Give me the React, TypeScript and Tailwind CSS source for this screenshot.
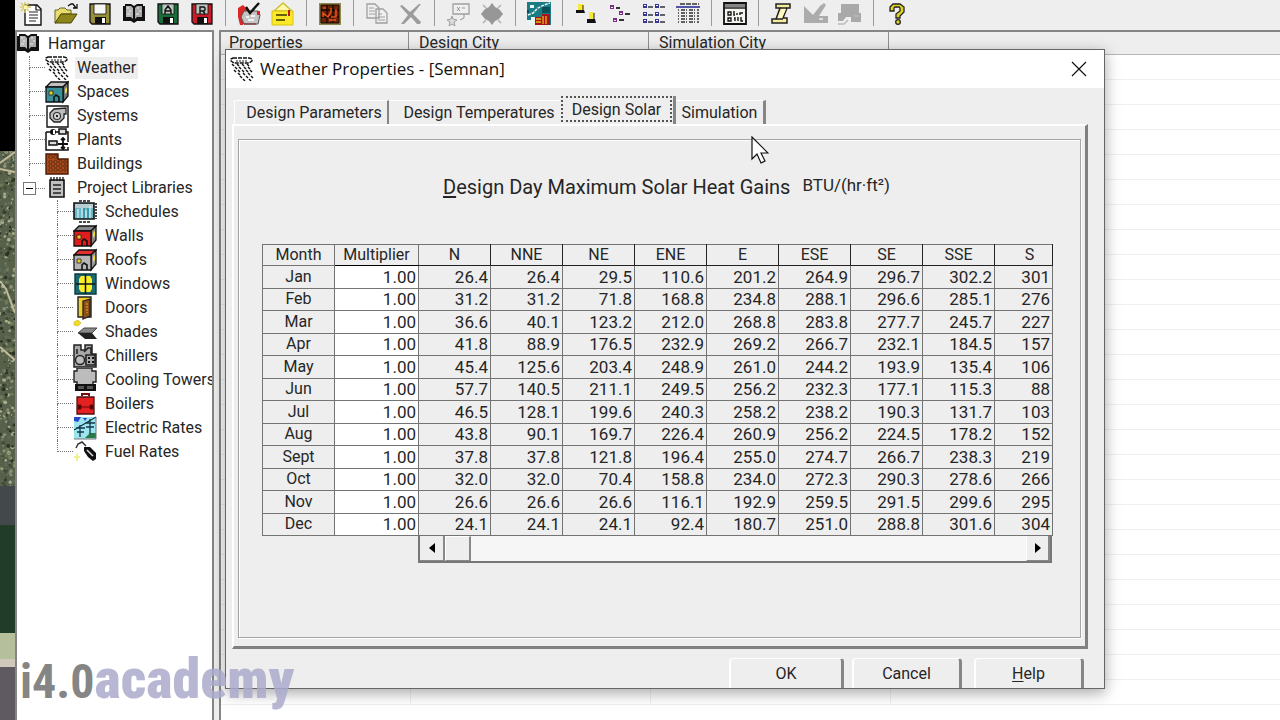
import React from "react";

type IconProps = { children: React.ReactNode; size?: string };

function Pix({ children, size = "h-6 w-6" }: IconProps) {
  return (
    <svg viewBox="0 0 24 24" className={`${size} shrink-0`} aria-hidden="true">
      {children}
    </svg>
  );
}

/* ---------- toolbar icons ---------- */

const NewIcon = () => (
  <Pix>
    <path d="M5 3h12l4 4v16H5z" fill="#fff" stroke="#111" strokeWidth="1.4" />
    <path d="M16 3v5h5" fill="none" stroke="#111" strokeWidth="1.2" />
    <path d="M9 10h9M9 13h9M9 16h9M9 19h7" stroke="#222" strokeWidth="1.2" />
    <path d="M1 1l8 8M9 1L1 9M5 0v11M0 5h11" stroke="#d8cc70" strokeWidth="1.5" />
    <path d="M4 4h3v3H4z" fill="#fff8b0" />
  </Pix>
);
const OpenIcon = () => (
  <Pix>
    <path d="M1 8h3l2-2h5l2 2h4v4H7l-5 9H1z" fill="#e8dc70" stroke="#6a6420" />
    <path d="M7 12h16l-6 9H1z" fill="#8c861c" stroke="#4a4600" />
    <path d="M14 4l3-2h2l3 4M19 6h4V2" fill="none" stroke="#111" strokeWidth="1.3" />
  </Pix>
);
const Floppy = ({ color, letter }: { color: string; letter?: string }) => (
  <Pix>
    <path d="M2 2h20v20H4l-2-2z" fill={color} stroke="#111" strokeWidth="1.3" />
    <path d="M6 2h12v10H6z" fill={letter ? "#b9c4bc" : "#f5f5f5"} stroke="#111" strokeWidth="0.8" />
    <path d="M7 15h11v7H7z" fill="#111" />
    <path d="M14 16h3v5h-3z" fill="#fff" />
    {letter === "A" && <path d="M9 12V8l3-4 3 4v4M9 9h6" fill="none" stroke="#111" strokeWidth="1.4" />}
    {letter === "R" && <path d="M10 12V5h4l1 1v2l-1 1h-4M13 9l2 3" fill="none" stroke="#111" strokeWidth="1.4" />}
  </Pix>
);
const BookIcon = () => (
  <Pix>
    <path d="M1 4h2V2h6l3 2 3-2h6v2h2v15h-8l-3 2-3-2H1z" fill="#111" />
    <path d="M4 4h5l2 2v11l-2-2H4z" fill="#b5b5b5" />
    <path d="M20 4h-5l-2 2v11l2-2h5z" fill="#a8a8a8" />
    <path d="M5 6h2M7 9h2M5 12h3M15 6h2M17 9h2M14 12h3" stroke="#eee" />
  </Pix>
);
const EditIcon = () => (
  <Pix>
    <path d="M1 6l5-3 4 4 1 9-5 7H3L1 15z" fill="#d82828" />
    <path d="M7 9h14l2 4-2 9H7L4 15z" fill="#c4c4c4" stroke="#555" />
    <path d="M9 5l4 6L22 1" fill="none" stroke="#111" strokeWidth="2.4" />
    <path d="M9 15h3M14 14h4M11 18h6" stroke="#fff" strokeWidth="1.6" />
    <path d="M20 9h3v4h-3z" fill="#e02020" />
    <path d="M7 22h12" stroke="#7a2020" />
  </Pix>
);
const NoteIcon = () => (
  <Pix>
    <path d="M3 9L12 1l9 8z" fill="#fff9b0" stroke="#cdbf30" strokeWidth="1.4" />
    <path d="M1 9h21v14H1z" fill="#fbe928" stroke="#d8c410" />
    <path d="M5 13h11M5 18h9" stroke="#3a3600" strokeWidth="1.5" />
    <path d="M17 8h2v6h-2z" fill="#c01818" />
  </Pix>
);
const BoardIcon = () => (
  <Pix>
    <path d="M1 1h22v22H1z" fill="#8f8850" />
    <path d="M3 3h18v18H3z" fill="#6b2408" stroke="#1a0800" />
    <path d="M3 8h18M3 15h18M9 3v18M15 3v18" stroke="#180800" strokeWidth="1.3" />
    <path d="M5 15v-4l5 4 3-5v-4M18 7v8h-5M5 6h3M11 18h7" fill="none" stroke="#e8501c" strokeWidth="1.5" />
  </Pix>
);
const CopyIcon = () => (
  <Pix>
    <path d="M2 2h8l4 4v10H2zM11 7h7l4 4v10H11z" fill="#efefef" stroke="#a0a0a0" strokeWidth="1.3" />
    <path d="M4 6h5M4 9h6M4 12h6M13 12h4M13 15h7M13 18h7" stroke="#a0a0a0" />
  </Pix>
);
const DeleteIcon = () => (
  <Pix>
    <path d="M3 3l8 7 9-8h2l-8 10 8 8-1 2h-3l-6-7-7 7H2l7-9-8-9z" fill="#9c9c9c" />
  </Pix>
);
const TagIcon = () => (
  <Pix>
    <path d="M7 2h16v10H7z" fill="#f0f0f0" stroke="#a0a0a0" strokeWidth="1.3" />
    <path d="M11 5l3 4M14 5l-3 4M16 6h3M18 12v4l-4 2" fill="none" stroke="#989898" />
    <path d="M6 14l1 3 4 1-3 2 1 4-3-2-3 2 1-4-3-2 4-1z" fill="#ddd" stroke="#a0a0a0" />
  </Pix>
);
const DiamondIcon = () => (
  <Pix>
    <path d="M12 1l3 4 4 2 4 5-4 5-4 2-3 4-3-4-4-2-4-5 4-5 4-2z" fill="#979797" />
    <path d="M3 3l3 3M21 3l-3 3M3 21l3-3M21 21l-3-3" stroke="#b0b0b0" strokeWidth="1.5" />
  </Pix>
);
const CityIcon = () => (
  <Pix>
    <path d="M0 0h24v23H0z" fill="#1c7c84" />
    <path d="M1 13l5-2 5-5 6-3 6-2" fill="none" stroke="#e8f4f4" strokeWidth="1.5" strokeDasharray="3 1" />
    <path d="M0 23v-5h4v-3h4v8zM3 3h4v3H3z" fill="#e9f4f4" />
    <path d="M8 23v-8h7v-3h8v11z" fill="#a81414" />
    <path d="M9 17h5M9 20h5M16 14v8M19 14v8" stroke="#e8b420" strokeWidth="1.3" />
    <path d="M15 5h8v6h-8zM0 8h2v3H0z" fill="#0b5058" />
  </Pix>
);
const HatsIcon = () => (
  <Pix>
    <path d="M4 2h5v6H4zM15 10h5v7h-5z" fill="#fbe830" />
    <path d="M2 8h8l1 3H2zM13 17h8l1 4h-9z" fill="#111" />
    <path d="M9 3v5M20 11v6" stroke="#222" />
  </Pix>
);
const NodesIcon = () => (
  <Pix>
    <path d="M2 3h4v4H2zM11 9h4v4h-4zM5 16h4v4H5z" fill="#7c2c88" />
    <path d="M3 5h2v1H3zM12 11h2v1h-2zM6 18h2v1H6z" fill="#fff" />
    <path d="M8 6h4M17 12h5M11 18h5" stroke="#333" strokeWidth="1.8" />
  </Pix>
);
const ListIcon = () => (
  <Pix>
    {[4, 12, 19].map((y) => (
      <g key={y}>
        <path d={`M1 ${y - 2}h4v4h-4zM13 ${y - 2}h4v4h-4z`} fill="#34349a" />
        <path d={`M2 ${y - 1}h2v1h-2zM14 ${y - 1}h2v1h-2z`} fill="#fff" />
        <path d={`M6 ${y + 1}h5M18 ${y + 1}h5`} stroke="#333" strokeWidth="1.5" />
      </g>
    ))}
  </Pix>
);
const DetailIcon = () => (
  <Pix>
    <path d="M4 2h19" stroke="#333" strokeWidth="1.4" strokeDasharray="5 1" />
    <path d="M0 5h24" stroke="#4040a0" strokeWidth="1.8" />
    <path d="M2 8h21M2 11h21M2 14h21M2 17h21M2 20h21" stroke="#333" strokeWidth="1.5" strokeDasharray="1 2 4 1" />
  </Pix>
);
const WindowIcon = () => (
  <Pix>
    <path d="M1 1h22v21H1z" fill="#f4f4f0" stroke="#111" strokeWidth="1.8" />
    <path d="M2 2h20v3H2z" fill="#858585" />
    <path d="M1 6h22" stroke="#111" strokeWidth="1.4" />
    <path d="M5 10h3v3H5zM5 16h3v3H5z" fill="none" stroke="#111" strokeWidth="1.3" />
    <path d="M11 9v4h1M14 11v2M17 13v-2h3M11 16h1v3M15 15v4M18 15v4h2" fill="none" stroke="#111" strokeWidth="1.4" />
  </Pix>
);
const ScrollIcon = () => (
  <Pix>
    <path d="M6 2h14v4h-3l-4 10h4v5H2v-4h4L10 6H6z" fill="#f4ec9c" stroke="#222" strokeWidth="1.5" />
    <path d="M10 6h7M6 17h7" stroke="#222" strokeWidth="1.3" />
    <path d="M12 7h4l-4 9H8z" fill="#fff9c8" />
  </Pix>
);
const ChartIcon = () => (
  <Pix>
    <path d="M0 4l9 9 7-9 4-3 2 2-7 11h9v7H0z" fill="#acacac" />
    <path d="M15 17h4" stroke="#eee" strokeWidth="1.5" />
  </Pix>
);
const TruckIcon = () => (
  <Pix>
    <path d="M3 2h18v9h2v9H13v-5H8l-3 4H0v-8h3z" fill="#a9a9a9" />
    <path d="M0 22h6l4-4M16 14h5" fill="none" stroke="#bbb" strokeWidth="1.5" />
  </Pix>
);
const HelpIcon = () => (
  <Pix>
    <path d="M5 9V5l3-3h7l4 3v5l-4 4v2h-4v-4l4-3V6l-1-1h-4L9 6v3z" fill="#e2d424" stroke="#222" strokeWidth="1.3" />
    <circle cx="13" cy="20" r="2.3" fill="#e2d424" stroke="#222" strokeWidth="1.3" />
  </Pix>
);

/* ---------- tree icons ---------- */

const drops: [number, number[]][] = [
  [8, [3, 8, 13, 18]],
  [11, [6, 10, 15, 19]],
  [14, [5, 9, 13, 17, 21]],
  [17, [9, 14, 19]],
  [20, [11, 17, 22]],
  [23, [14, 20]],
];

const WeatherIcon = () => (
  <Pix>
    <path d="M3 1h16l3 1v2l-3 2H4L1 4V2z" fill="#fff" stroke="#111" strokeWidth="1.4" strokeDasharray="4 1" />
    <path d="M6 4h12" stroke="#222" strokeWidth="1.2" strokeDasharray="2 1" />
    {drops.map(([y, xs]) => xs.map((x) => <path key={`${x}-${y}`} d={`M${x - 1} ${y - 1}l2 2`} stroke="#111" strokeWidth="1.4" />))}
  </Pix>
);
const Cube = ({ front, top, side }: { front: string; top: string; side: string }) => (
  <Pix>
    <path d="M1 7l5-5h17l-5 5z" fill={top} stroke="#111" strokeWidth="1.3" />
    <path d="M18 7l5-5v14l-5 6z" fill={side} stroke="#111" strokeWidth="1.3" />
    <path d="M1 7h17v15H1z" fill={front} stroke="#111" strokeWidth="1.3" />
    <path d="M4 11h4v4H4z" fill="#e8cc28" stroke="#222" strokeWidth="0.8" />
    <path d="M9 22v-5l2-2 3 2v5" fill="none" stroke="#111" strokeWidth="1.6" />
    <path d="M20 9l2-2v5l-2 2z" fill="#f0dc28" />
  </Pix>
);
const SystemsIcon = () => (
  <Pix>
    <path d="M2 2h21v21H2z" fill="#fff" stroke="#111" strokeWidth="1.4" />
    <path d="M21 4v6h-2v4l-4 4H9l-4-4V9l4-4z" fill="#bdbdbd" stroke="#222" strokeWidth="1.3" />
    <circle cx="12" cy="12" r="3.5" fill="#ddd" stroke="#333" strokeWidth="1.2" />
    <circle cx="12" cy="12" r="1.2" fill="#222" />
  </Pix>
);
const PlantsIcon = () => (
  <Pix>
    <path d="M1 4h22v10M1 4v18h22v-3" fill="#fff" stroke="#111" strokeWidth="1.5" />
    <circle cx="8" cy="4" r="3" fill="#111" />
    <path d="M8 2h2v4H8z" fill="#fff" />
    <path d="M14 1h7v5h-7zM4 13h8v4H4z" fill="#ddd" stroke="#111" strokeWidth="1.5" />
    <path d="M18 10v11M13 16h10M16 12l2-2 2 2M16 19l2 2 2-2" fill="none" stroke="#111" strokeWidth="1.8" />
  </Pix>
);
const BuildingsIcon = () => (
  <Pix>
    <path d="M1 2h12v5h10v15H1z" fill="#a8481c" stroke="#4a1a04" strokeWidth="1.4" />
    <path d="M4 4h3v2H4zM9 4h3v2H9z" fill="#d87030" stroke="#3a1400" strokeWidth="0.7" />
    {[9, 13, 17].map((y) => (
      <path
        key={y}
        d={`M4 ${y}h3v2h-3zM9 ${y}h3v2h-3zM14 ${y}h3v2h-3zM19 ${y}h2v2h-2z`}
        fill="#d87838"
        stroke="#3a1400"
        strokeWidth="0.7"
      />
    ))}
  </Pix>
);
const LibraryIcon = () => (
  <Pix>
    <path d="M5 4h14v17H5z" fill="#c0c0c0" stroke="#111" strokeWidth="1.6" />
    <path d="M6 1v4M9 1v4M12 1v4M15 1v4M18 1v4" stroke="#111" strokeWidth="1.3" />
    <path d="M8 9h8M8 13h8M8 17h8" stroke="#222" strokeWidth="1.5" />
  </Pix>
);
const SchedulesIcon = () => (
  <Pix>
    <path d="M6 1h12M6 22h12" stroke="#111" strokeWidth="1.5" strokeDasharray="3 1" />
    <path d="M1 3h20v16H1z" fill="#68b8c8" stroke="#111" strokeWidth="1.6" />
    <path d="M2 4h18v4H2z" fill="#b8ccd4" />
    <path d="M5 9v9M9 8v10M13 10v8M17 6v12" stroke="#d3eef4" strokeWidth="1.3" />
    <path d="M11 8v10M15 8v10" stroke="#27808c" strokeWidth="1.2" />
    <path d="M23 3v16" stroke="#111" strokeWidth="1.5" strokeDasharray="2 1" />
  </Pix>
);
const WindowsIcon = () => (
  <Pix>
    <path d="M2 2h21v20H2z" fill="#1a6c70" stroke="#0a3a3c" strokeWidth="1.4" />
    <path d="M8 4h9l2 3v10l-2 3H8l-2-3V7z" fill="#fbee28" />
    <path d="M12.5 2v20M3 12h19" stroke="#111" strokeWidth="1.5" />
  </Pix>
);
const DoorsIcon = () => (
  <Pix>
    <path d="M5 1h13v20H5z" fill="#f2cc28" stroke="#222" strokeWidth="1.4" />
    <path d="M10 5l7-2v17l-7 3z" fill="#8c5018" stroke="#222" strokeWidth="1.3" />
    <path d="M14 7v10" stroke="#c88830" strokeWidth="1.5" strokeDasharray="2 1" />
  </Pix>
);
const ShadesIcon = () => (
  <Pix>
    <path d="M1 2l4-2 3 3-3 3-4-1z" fill="#f2dc28" stroke="#d0b830" strokeWidth="0.7" />
    <path d="M5 13l6-5h13l-5 5z" fill="#8a8a8a" stroke="#444" />
    <path d="M5 13h14l5 6H12z" fill="#222" />
  </Pix>
);
const ChillersIcon = () => (
  <Pix>
    <path d="M1 1h7v5h4V1h7v9h4v13H1z" fill="#a8a8a8" stroke="#222" strokeWidth="1.5" />
    <circle cx="7" cy="16" r="4.5" fill="#bdbdbd" stroke="#222" strokeWidth="1.4" />
    <path d="M13 11h9v10h-9zM11 8l4-4h3v6M4 5v5" fill="none" stroke="#222" strokeWidth="1.6" />
    <path d="M15 14h2M19 14h2M15 18h2M19 18h2" stroke="#111" strokeWidth="1.8" />
  </Pix>
);
const TowersIcon = () => (
  <Pix>
    <path d="M4 0h15v3h4v11h-3v3H4v-3H1V3h3z" fill="#bcbcbc" stroke="#222" strokeWidth="1.4" />
    <path d="M2 16h21v7H2z" fill="#111" />
    <path d="M5 18h6v3H5zM14 18h6v3h-6z" fill="#555" />
  </Pix>
);
const BoilersIcon = () => (
  <Pix>
    <path d="M9 4V2h7v2" fill="none" stroke="#701010" strokeWidth="2" />
    <path d="M4 5h17v17H4z" fill="#e42020" stroke="#501010" strokeWidth="1.3" />
    <path d="M5 13h3v4H5zM17 13h3v4h-3zM8 15h9" fill="#4a0000" stroke="#6a0808" />
  </Pix>
);
const ElectricIcon = () => (
  <Pix>
    <path d="M1 1h22v22H1z" fill="#9ce4f0" />
    <path d="M1 1h7l-3 5-4-1zM10 2h4l-2 3z" fill="#2848d0" />
    <path d="M12 22l5-5h6v5z" fill="#287848" />
    <path d="M1 14L23 1M7 9v12M17 3v15M3 12h9M4 16h7M12 7h10M13 11h8" stroke="#143848" strokeWidth="1.3" />
    <path d="M23 1v22H1" fill="none" stroke="#777" />
  </Pix>
);
const FuelIcon = () => (
  <Pix>
    <path d="M3 8l2-4 4-2 4 4" fill="none" stroke="#333" strokeWidth="1.5" />
    <path d="M11 7h6l6 6v6l-3 2-5-4-4-6z" fill="#111" />
    <path d="M14 10l6 6" stroke="#ddd" strokeWidth="1.5" />
    <path d="M4 13v8M1 17h6" stroke="#f2ec78" strokeWidth="1.5" />
  </Pix>
);

/* ---------- data ---------- */

type Tool = { label: string; icon: React.ReactNode };
const toolGroups: Tool[][] = [
  [
    { label: "New", icon: <NewIcon /> },
    { label: "Open", icon: <OpenIcon /> },
    { label: "Save", icon: <Floppy color="#96903a" /> },
    { label: "Book", icon: <BookIcon /> },
    { label: "Archive", icon: <Floppy color="#1c6b3a" letter="A" /> },
    { label: "Retrieve", icon: <Floppy color="#c81c28" letter="R" /> },
  ],
  [
    { label: "Edit", icon: <EditIcon /> },
    { label: "Notes", icon: <NoteIcon /> },
  ],
  [{ label: "Board", icon: <BoardIcon /> }],
  [
    { label: "Copy", icon: <CopyIcon /> },
    { label: "Delete", icon: <DeleteIcon /> },
  ],
  [
    { label: "Rename", icon: <TagIcon /> },
    { label: "Replace", icon: <DiamondIcon /> },
  ],
  [{ label: "Building Wizard", icon: <CityIcon /> }],
  [
    { label: "Large icons", icon: <HatsIcon /> },
    { label: "Small icons", icon: <NodesIcon /> },
    { label: "List", icon: <ListIcon /> },
    { label: "Details", icon: <DetailIcon /> },
  ],
  [{ label: "Options", icon: <WindowIcon /> }],
  [
    { label: "Input report", icon: <ScrollIcon /> },
    { label: "Design report", icon: <ChartIcon /> },
    { label: "Simulation report", icon: <TruckIcon /> },
  ],
  [{ label: "Help topics", icon: <HelpIcon /> }],
];

const branches: Tool[] = [
  { label: "Weather", icon: <WeatherIcon /> },
  { label: "Spaces", icon: <Cube front="#3a9098" top="#c0c0c0" side="#777" /> },
  { label: "Systems", icon: <SystemsIcon /> },
  { label: "Plants", icon: <PlantsIcon /> },
  { label: "Buildings", icon: <BuildingsIcon /> },
];

const libraries: Tool[] = [
  { label: "Schedules", icon: <SchedulesIcon /> },
  { label: "Walls", icon: <Cube front="#e01c1c" top="#888" side="#888" /> },
  { label: "Roofs", icon: <Cube front="#b5b5b5" top="#e03030" side="#999" /> },
  { label: "Windows", icon: <WindowsIcon /> },
  { label: "Doors", icon: <DoorsIcon /> },
  { label: "Shades", icon: <ShadesIcon /> },
  { label: "Chillers", icon: <ChillersIcon /> },
  { label: "Cooling Towers", icon: <TowersIcon /> },
  { label: "Boilers", icon: <BoilersIcon /> },
  { label: "Electric Rates", icon: <ElectricIcon /> },
  { label: "Fuel Rates", icon: <FuelIcon /> },
];

const directions = ["N", "NNE", "NE", "ENE", "E", "ESE", "SE", "SSE", "S"];
const solar: [string, string[]][] = [
  ["Jan", ["26.4", "26.4", "29.5", "110.6", "201.2", "264.9", "296.7", "302.2", "301"]],
  ["Feb", ["31.2", "31.2", "71.8", "168.8", "234.8", "288.1", "296.6", "285.1", "276"]],
  ["Mar", ["36.6", "40.1", "123.2", "212.0", "268.8", "283.8", "277.7", "245.7", "227"]],
  ["Apr", ["41.8", "88.9", "176.5", "232.9", "269.2", "266.7", "232.1", "184.5", "157"]],
  ["May", ["45.4", "125.6", "203.4", "248.9", "261.0", "244.2", "193.9", "135.4", "106"]],
  ["Jun", ["57.7", "140.5", "211.1", "249.5", "256.2", "232.3", "177.1", "115.3", "88"]],
  ["Jul", ["46.5", "128.1", "199.6", "240.3", "258.2", "238.2", "190.3", "131.7", "103"]],
  ["Aug", ["43.8", "90.1", "169.7", "226.4", "260.9", "256.2", "224.5", "178.2", "152"]],
  ["Sept", ["37.8", "37.8", "121.8", "196.4", "255.0", "274.7", "266.7", "238.3", "219"]],
  ["Oct", ["32.0", "32.0", "70.4", "158.8", "234.0", "272.3", "290.3", "278.6", "266"]],
  ["Nov", ["26.6", "26.6", "26.6", "116.1", "192.9", "259.5", "291.5", "299.6", "295"]],
  ["Dec", ["24.1", "24.1", "24.1", "92.4", "180.7", "251.0", "288.8", "301.6", "304"]],
];

/* ---------- parts ---------- */

const scatter = (n: number) => {
  const v = Math.sin(n * 127.1) * 43758.5453;
  return v - Math.floor(v);
};

function DesktopStrip() {
  const palette = ["#2c3325", "#6f7a58", "#a9ad8c", "#454d38", "#8a9078", "#5d6a58"];
  const leaves = Array.from({ length: 420 }, (_, i) => ({
    x: scatter(i + 1) * 15,
    y: scatter(i + 500) * 350,
    r: 0.6 + scatter(i + 900) * 1.4,
    c: palette[Math.floor(scatter(i + 1300) * palette.length)],
  }));
  return (
    <div className="flex w-[15px] shrink-0 flex-col" aria-hidden="true">
      <div className="h-[151px] bg-black" />
      <svg className="w-full flex-1" viewBox="0 0 15 569" preserveAspectRatio="none">
        <rect width="15" height="569" fill="#56604a" />
        {leaves.map((l, i) => (
          <ellipse key={i} cx={l.x} cy={l.y} rx={l.r} ry={l.r} fill={l.c} />
        ))}
        <path d="M0 12l15-11M0 18l15 3M0 130l6 8 9 24M0 196l15 13" fill="none" stroke="#c2bb9c" strokeWidth="2" />
        <rect y="335" width="15" height="45" fill="#43494a" />
        <rect y="374" width="15" height="110" fill="#223c2a" />
        <rect y="482" width="15" height="30" fill="#b5bf9c" />
        <rect y="508" width="15" height="8" fill="#d0c8ba" />
        <rect y="516" width="15" height="53" fill="#5f5a62" />
      </svg>
    </div>
  );
}

function Connector({ last = false }: { last?: boolean }) {
  return (
    <span className="flex w-4 shrink-0 flex-col self-stretch">
      <span className="h-1/2 border-b border-l border-dotted border-[#777]" />
      <span className={last ? "h-1/2" : "h-1/2 border-l border-dotted border-[#777]"} />
    </span>
  );
}

function ProjectTree() {
  return (
    <nav
      aria-label="Project"
      className="w-[199px] shrink-0 overflow-hidden border-2 border-b-0 border-[#858585] bg-white whitespace-nowrap"
    >
      <ul>
        <li>
          <div className="-ml-px flex h-6 items-center gap-2">
            <BookIcon />
            Hamgar
          </div>
          <ul className="pl-3">
            {branches.map((b) => (
              <li key={b.label} className="flex h-6 items-center">
                <Connector />
                {b.icon}
                <a
                  href={`#${b.label}`}
                  className={b.label === "Weather" ? "ml-1.5 bg-[#eeeeee] px-0.5" : "ml-1.5 px-0.5"}
                >
                  {b.label}
                </a>
              </li>
            ))}
            <li>
              <div className="-ml-1.5 flex h-6 items-center">
                <button
                  type="button"
                  aria-label="Collapse Project Libraries"
                  className="flex h-[13px] w-[13px] shrink-0 items-center justify-center border border-[#777] bg-white"
                >
                  <span className="h-px w-[7px] bg-black" />
                </button>
                <span className="w-[9px] border-b border-dotted border-[#777]" />
                <LibraryIcon />
                <a href="#libraries" className="ml-1.5 px-0.5">
                  Project Libraries
                </a>
              </div>
              <ul className="pl-7">
                {libraries.map((l, i) => (
                  <li key={l.label} className="flex h-6 items-center">
                    <Connector last={i === libraries.length - 1} />
                    {l.icon}
                    <a href={`#${l.label}`} className="ml-1.5 px-0.5">
                      {l.label}
                    </a>
                  </li>
                ))}
              </ul>
            </li>
          </ul>
        </li>
      </ul>
    </nav>
  );
}

function PropertyList() {
  return (
    <section
      aria-label="Weather list"
      className="min-w-0 flex-1 overflow-hidden border-t-2 border-l-2 border-[#858585] bg-white"
    >
      <div className="flex h-[23px] items-center border-b border-[#b5b5b5] bg-[#eeeeee] leading-6">
        <span className="w-[188px] border-r border-[#909090] pl-2">Properties</span>
        <span className="w-60 border-r border-[#909090] pl-2.5">Design City</span>
        <span className="w-60 border-r border-[#909090] pl-2.5">Simulation City</span>
      </div>
      <div className="flex flex-col">
        {Array.from({ length: 26 }, (_, i) => (
          <div key={i} className="flex h-[25px] shrink-0 border-b border-[#f0f0f0]">
            <span className="w-[190px] border-r border-[#f0f0f0]" />
            <span className="w-60 border-r border-[#f0f0f0]" />
            <span className="w-60 border-r border-[#f0f0f0]" />
          </div>
        ))}
      </div>
    </section>
  );
}

const grid = "border border-[#747474]";

function SolarTable() {
  return (
    <div className="w-[790px]">
      <table
        aria-label="Design Day Maximum Solar Heat Gains"
        className="h-[292px] w-full table-fixed border-collapse leading-5"
      >
        <colgroup>
          <col className="w-[72px]" />
          <col className="w-[84px]" />
          {directions.map((d) => (
            <col key={d} className={d === "S" ? "w-[58px]" : "w-[72px]"} />
          ))}
        </colgroup>
        <thead>
          <tr>
            <th scope="col" className={`${grid} p-0 font-normal`}>Month</th>
            <th scope="col" className={`${grid} border-b-black p-0 font-normal`}>Multiplier</th>
            {directions.map((d) => (
              <th
                key={d}
                scope="col"
                className={`${grid} border-r-[#222] border-b-[#222] p-0 font-normal ${d === "S" ? "pl-3" : ""}`}
              >
                {d}
              </th>
            ))}
          </tr>
        </thead>
        <tbody>
          {solar.map(([month, values]) => (
            <tr key={month} className="text-[17px]">
              <th scope="row" className={`${grid} p-0 text-base leading-5 font-normal`}>{month}</th>
              <td className={`${grid} bg-white p-0 pr-0.5 text-right leading-5`}>1.00</td>
              {values.map((v, i) => (
                <td key={i} className={`${grid} p-0 pr-0.5 text-right leading-5`}>{v}</td>
              ))}
            </tr>
          ))}
        </tbody>
      </table>
      <div className="ml-[156px] flex h-[27px] items-stretch border-2 border-t-0 border-[#777] bg-[#f6f6f6]">
        <button
          type="button"
          aria-label="Scroll left"
          className="flex w-[25px] items-center justify-center border-r-2 border-b border-[#888] bg-[#eeeeee]"
        >
          <svg viewBox="0 0 6 10" className="h-2.5 w-1.5" aria-hidden="true"><path d="M6 0v10L0 5z" /></svg>
        </button>
        <button
          type="button"
          aria-label="Scroll position"
          className="w-[26px] border-t border-r-2 border-b border-l border-t-white border-r-[#888] border-b-[#888] border-l-white bg-[#eeeeee]"
        />
        <span className="flex-1" />
        <button
          type="button"
          aria-label="Scroll right"
          className="flex w-6 items-center justify-center border-r-2 border-b border-l border-r-[#888] border-b-[#888] border-l-white bg-[#eeeeee]"
        >
          <svg viewBox="0 0 6 10" className="h-2.5 w-1.5" aria-hidden="true"><path d="M0 0v10l6-5z" /></svg>
        </button>
      </div>
    </div>
  );
}

const tabBase = "h-6 whitespace-nowrap border-t border-t-white border-r-2";
const dialogButton =
  "h-[30px] rounded-t-sm border-t border-l-2 border-r-[3px] border-t-white border-l-white border-r-[#858585]";

function WeatherDialog() {
  return (
    <div
      role="dialog"
      aria-labelledby="dialog-title"
      className="absolute top-[49px] right-[175px] left-[225px] border border-[#666] bg-[#eeeeee] shadow-[0_4px_14px_rgba(0,0,0,0.35)]"
    >
      <header className="flex h-[38px] items-center bg-white pr-4 pl-1">
        <WeatherIcon />
        <h1 id="dialog-title" className="ml-1.5 flex-1 font-['Open_Sans','Noto_Sans',sans-serif] text-[17px] text-[#111]">
          Weather Properties - [Semnan]
        </h1>
        <button type="button" aria-label="Close" className="p-px">
          <svg viewBox="0 0 16 16" className="h-4 w-4" aria-hidden="true">
            <path d="M1 1l14 14M15 1L1 15" stroke="#111" strokeWidth="1.2" />
          </svg>
        </button>
      </header>

      <div className="pr-2 pl-1.5">
        <div role="tablist" className="flex h-9 items-end pl-0.5">
          <button
            type="button"
            role="tab"
            aria-selected="false"
            className={`${tabBase} w-[155px] border-l border-r-[#858585] border-l-white pl-1.5`}
          >
            Design Parameters
          </button>
          <button type="button" role="tab" aria-selected="false" className={`${tabBase} w-[172px] border-r-transparent pl-2.5`}>
            Design Temperatures
          </button>
          <button
            type="button"
            role="tab"
            aria-selected="true"
            className="h-7 w-[115px] border-r-[3px] border-r-[#858585] pr-px pb-0.5"
          >
            <span className="flex h-[26px] items-center justify-center border-2 border-dotted border-[#555] pt-0.5">
              Design Solar
            </span>
          </button>
          <button type="button" role="tab" aria-selected="false" className={`${tabBase} w-[90px] border-r-[3px] border-r-[#858585]`}>
            Simulation
          </button>
        </div>

        <div
          role="tabpanel"
          className="mr-2 border-t-2 border-r-[3px] border-b-[3px] border-l-2 border-t-white border-r-[#808080] border-b-[#808080] border-l-white px-1 pt-[13px] pb-2"
        >
          <div className="h-[499px] border border-[#a5a5a5] px-[23px] pt-[33px] shadow-[inset_1px_1px_0_white,1px_1px_0_white]">
            <div className="ml-[181px] flex h-[71px] items-start gap-3">
              <h2 className="pt-0.5 text-xl leading-6">
                <u className="underline-offset-2">D</u>esign Day Maximum Solar Heat Gains
              </h2>
              <p className="text-[17px] leading-6">BTU/(hr·ft²)</p>
            </div>
            <SolarTable />
          </div>
        </div>

        <footer className="mr-3 flex justify-end gap-2 pt-[9px]">
          <button type="button" className={`${dialogButton} w-[115px]`}>OK</button>
          <button type="button" className={`${dialogButton} w-[110px]`}>Cancel</button>
          <button type="button" className={`${dialogButton} ml-1 w-[110px]`}>
            <u className="underline-offset-2">H</u>elp
          </button>
        </footer>
      </div>
    </div>
  );
}

export default function App() {
  return (
    <div className="relative flex h-screen overflow-hidden bg-[#eeeeee] font-[Roboto,'Liberation_Sans',sans-serif] text-base leading-[22px] text-[#262626]">
      <DesktopStrip />
      <main className="flex min-w-0 flex-1 flex-col">
        <div role="toolbar" aria-label="Main" className="flex h-[30px] shrink-0 items-start">
          {toolGroups.map((group, g) => (
            <div key={g} className="flex">
              {g > 0 && <span className="mx-1.5 h-[26px] w-px bg-[#9a9a9a]" />}
              {group.map((t) => (
                <button key={t.label} type="button" aria-label={t.label} className="flex w-[34px] justify-center pt-0.5">
                  {t.icon}
                </button>
              ))}
            </div>
          ))}
        </div>
        <div className="flex min-h-0 flex-1 gap-[5px]">
          <ProjectTree />
          <PropertyList />
        </div>
      </main>

      <WeatherDialog />

      <svg
        viewBox="0 0 18 28"
        className="pointer-events-none absolute top-[136px] left-[751px] h-7 w-[18px]"
        aria-hidden="true"
      >
        <path d="M1 1v22l5-5 4 9 4-2-4-8h7z" fill="#fff" stroke="#111" strokeWidth="1.2" />
      </svg>

      <p className="pointer-events-none absolute bottom-2 left-5 flex items-baseline font-['Roboto_Condensed',Roboto,sans-serif] leading-[60px]">
        <span className="text-5xl leading-[60px] font-bold text-[#858585]">i4.0</span>
        <span className="text-[56px] leading-[60px] font-black text-[#aaaacb]/85">academy</span>
      </p>
    </div>
  );
}
